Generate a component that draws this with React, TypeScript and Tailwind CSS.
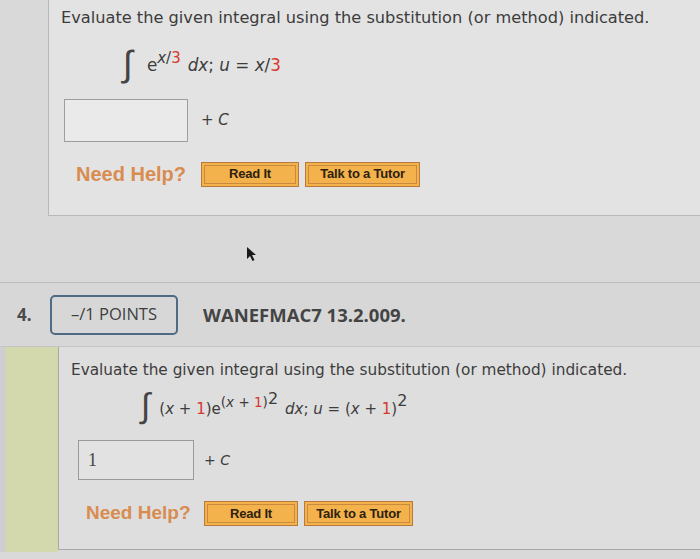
import React from "react";

const verdana = { fontFamily: '"DejaVu Sans", Verdana, sans-serif' };

function HelpButton({ label, width }: { label: string; width: string }) {
  return (
    <div
      className={`${width} h-[25px] border border-[#b77a3c] bg-[#f3b24c] p-[2px]`}
    >
      <div className="flex h-full items-center justify-center border border-[#c98a3e] text-[13px] font-bold tracking-[-0.2px] text-[#2e210e] [font-family:'Liberation_Sans',Arial,sans-serif]">
        {label}
      </div>
    </div>
  );
}

function NeedHelp({
  labelCls,
  readW,
  tutorW,
}: {
  labelCls: string;
  readW: string;
  tutorW: string;
}) {
  return (
    <div className="flex items-center">
      <span
        className={`${labelCls} font-bold text-[#d98c4f] [font-family:'Liberation_Sans',Arial,sans-serif]`}
      >
        Need Help?
      </span>
      <div className="flex gap-[6px]">
        <HelpButton label="Read It" width={readW} />
        <HelpButton label="Talk to a Tutor" width={tutorW} />
      </div>
    </div>
  );
}

function Red({ children }: { children: React.ReactNode }) {
  return <span className="text-[#d6382f] not-italic">{children}</span>;
}

export default function App() {
  return (
    <div
      className="relative h-[559px] w-[700px] overflow-hidden bg-[#d9d9d9] text-[#3c3c3c]"
      style={verdana}
    >
      {/* question 3 (tail) */}
      <div className="flex">
        <div className="w-[48px] shrink-0" />
        <div className="h-[216px] flex-1 border-b border-l border-[#b9b9b9] bg-[#e3e3e3] pl-[12px]">
          <p className="pt-[8px] text-[16.2px] leading-[20px]">
            Evaluate the given integral using the substitution (or method)
            indicated.
          </p>
          <div className="mt-[14px] flex items-center pl-[62px]">
            <span className="text-[36px] font-light leading-[44px] text-[#444]">
              ∫
            </span>
            <span className="ml-[14px] mt-[4px] text-[16.8px]">
              e
              <span className="relative top-[-8px] text-[15px]">
                <i>x</i>/<Red>3</Red>
              </span>
              <span className="ml-[7px] italic">dx</span>; <i>u</i> = <i>x</i>/
              <Red>3</Red>
            </span>
          </div>
          <div className="mt-[13px] flex items-center">
            <div className="ml-[3px] h-[43px] w-[124px] border border-[#9e9e9e] bg-[#eaeaea]" />
            <span className="ml-[13px] text-[15px]">
              + <i>C</i>
            </span>
          </div>
          <div className="mt-[17px] pl-[15px]">
            <NeedHelp
              labelCls="w-[125px] text-[20px]"
              readW="w-[98px]"
              tutorW="w-[115px]"
            />
          </div>
        </div>
      </div>

      {/* gap */}
      <div className="h-[67px] border-b border-[#bdbdbd]" />

      {/* question 4 header */}
      <div className="flex h-[63px] items-center bg-[#d7d7d7]">
        <span className="ml-[17px] w-[33px] text-[17px] font-bold text-[#4a4a4a] [font-family:'Open_Sans',sans-serif]">
          4.
        </span>
        <div className="flex h-[40px] w-[128px] items-center justify-center rounded-[5px] border-2 border-[#4d6b84] text-[16.5px] font-medium text-[#3e3e3e] [font-family:'Open_Sans',sans-serif]">
          –/1 POINTS
        </div>
        <span className="ml-[25px] text-[18.5px] font-bold text-[#444] [font-family:'Open_Sans',sans-serif]">
          WANEFMAC7 13.2.009.
        </span>
      </div>

      {/* question 4 body */}
      <div className="flex h-[206px] border-t border-[#c4c4c4]">
        <div className="w-[6px] shrink-0 bg-[#cfcfcf]" />
        <div className="w-[52px] shrink-0 bg-[#d3d8ad]" />
        <div className="h-[203px] flex-1 border-b border-l border-[#a9a9a9] bg-[#dedede] pl-[12px]">
          <p className="pt-[13px] text-[15.3px] leading-[20px]">
            Evaluate the given integral using the substitution (or method)
            indicated.
          </p>
          <div className="mt-[4px] flex items-center pl-[70px]">
            <span className="text-[34px] font-light leading-[42px] text-[#444]">
              ∫
            </span>
            <span className="ml-[9px] mt-[8px] text-[15px]">
              (<i>x</i> + <Red>1</Red>)e
              <span className="relative top-[-7px] text-[13.5px]">
                (<i>x</i> + <Red>1</Red>)
                <span className="relative top-[-3px] text-[16px]">2</span>
              </span>
              <span className="ml-[7px] italic">dx</span>; <i>u</i> = (
              <i>x</i> + <Red>1</Red>)
              <span className="relative top-[-8px] text-[16px]">2</span>
            </span>
          </div>
          <div className="mt-[14px] flex items-center">
            <div className="ml-[7px] flex h-[40px] w-[116px] items-center border border-[#9a9a9a] bg-[#e2e2e2] pl-[9px] text-[18px] text-[#444] [font-family:'Liberation_Serif',serif]">
              1
            </div>
            <span className="ml-[10px] text-[14px]">
              + <i>C</i>
            </span>
          </div>
          <div className="mt-[19px] pl-[15px]">
            <NeedHelp
              labelCls="w-[118px] text-[19px]"
              readW="w-[94px]"
              tutorW="w-[109px]"
            />
          </div>
        </div>
      </div>

      {/* mouse pointer */}
      <svg
        className="absolute left-[246px] top-[246px]"
        width="12"
        height="16"
        viewBox="0 0 12 16"
      >
        <path d="M1 1 L1 13 L4 10 L6.5 15 L8.5 14 L6 9 L10 9 Z" fill="#1a1a1a" />
      </svg>
    </div>
  );
}
